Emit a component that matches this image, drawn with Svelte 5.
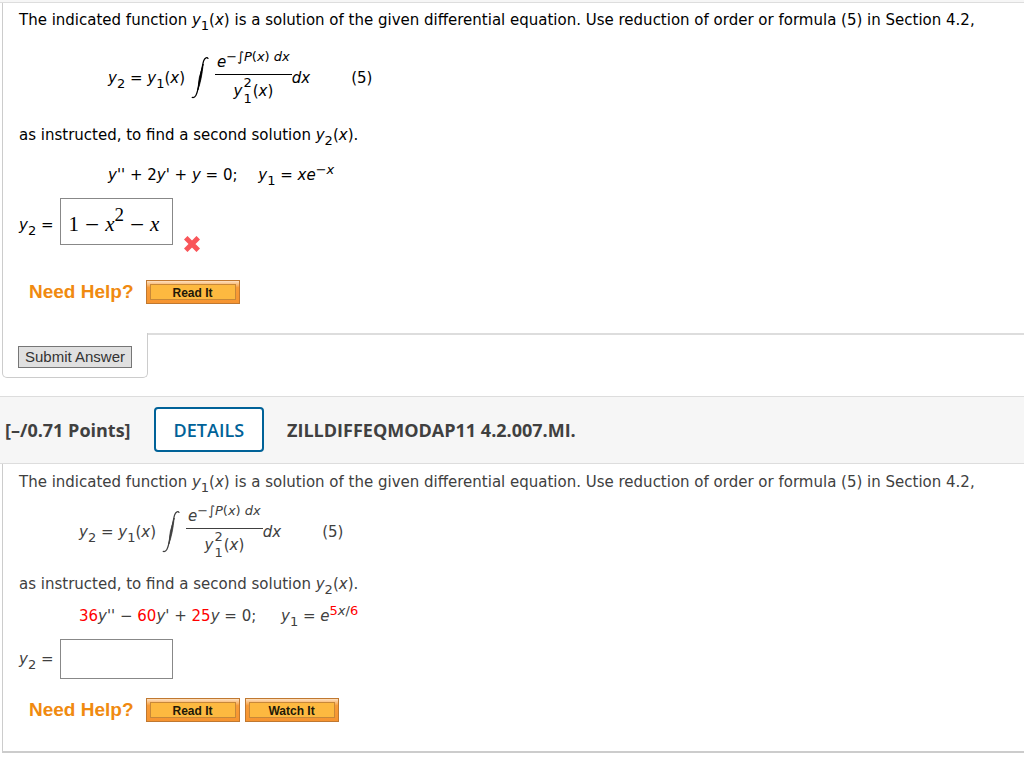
<script lang="ts">
	let answer = $state('');
	let submitted = $state(false);

	const points = '[–/0.71 Points]';
	const source = 'ZILLDIFFEQMODAP11 4.2.007.MI.';
</script>

{#snippet intro()}
	<p class="text">
		The indicated function <i>y</i><sub>1</sub>(<i>x</i>) is a solution of the given differential equation. Use
		reduction of order or formula (5) in Section 4.2,
	</p>
{/snippet}

{#snippet instructions()}
	<p class="text">as instructed, to find a second solution <i>y</i><sub>2</sub>(<i>x</i>).</p>
{/snippet}

{#snippet formula()}
	<div class="formula">
		<span class="lhs"><i>y</i><sub>2</sub> = <i>y</i><sub>1</sub>(<i>x</i>)</span>
		<svg class="integral" viewBox="0 0 18 44" width="18" height="44" aria-label="integral">
			<path
				d="M17 2.4C16.4 1.2 13.8 1.2 12.6 5C11.2 9.5 9.2 23 7.2 32C5.8 38.5 4.4 42.3 1.2 41.4"
				fill="none"
				stroke="currentColor"
				stroke-width="1.2"
				stroke-linecap="round"
			/>
			<path d="M12.2 8Q10.6 24 6.8 34Q7.2 22 12.2 8Z" fill="currentColor" stroke="currentColor" stroke-width="0.8" />
		</svg>
		<span class="fraction">
			<span class="numerator"><i>e</i><sup>−∫<i>P</i>(<i>x</i>) <i>dx</i></sup></span>
			<span class="denominator">
				<i>y</i><span class="stack"><span>2</span><span>1</span></span>(<i>x</i>)
			</span>
		</span>
		<i>dx</i>
		<span class="number">(5)</span>
	</div>
{/snippet}

{#snippet helpButton(label: string)}
	<button class="help-button" type="button"><span>{label}</span></button>
{/snippet}

<main>
	<section class="question first">
		<div class="body">
			{@render intro()}
			{@render formula()}
			{@render instructions()}
			<p class="equation">
				<i>y''</i> + 2<i>y'</i> + <i>y</i> = 0; <span class="initial"><i>y</i><sub>1</sub> = <i>xe</i><sup>−<i>x</i></sup></span>
			</p>
			<div class="answer">
				<span class="label" id="first-label"><i>y</i><sub>2</sub> =</span>
				<div class="math-box" role="textbox" tabindex="0" contenteditable="true" aria-labelledby="first-label">1<span class="op">−</span><i>x</i><sup>2</sup><span class="op">−</span><i>x</i></div>
				<svg class="wrong" viewBox="0 0 16 16" width="16" height="16" aria-label="Incorrect">
					<path d="M3.5 3.5L12.5 12.5M12.5 3.5L3.5 12.5" stroke="#f9565a" stroke-width="5" stroke-linecap="square" />
				</svg>
			</div>
			<div class="help">
				<strong>Need Help?</strong>
				{@render helpButton('Read It')}
			</div>
		</div>
		<div class="submit-row">
			<div class="submit-tab">
				<button class="submit" type="button" onclick={() => (submitted = true)} disabled={submitted}>Submit Answer</button>
			</div>
			<div class="rule"></div>
		</div>
	</section>

	<header>
		<strong>{points}</strong>
		<button class="details" type="button">DETAILS</button>
		<strong>{source}</strong>
	</header>

	<section class="question second">
		<div class="body">
			{@render intro()}
			{@render formula()}
			{@render instructions()}
			<p class="equation">
				<b>36</b><i>y''</i> − <b>60</b><i>y'</i> + <b>25</b><i>y</i> = 0; <span class="initial"><i>y</i><sub>1</sub> = <i>e</i><sup><b>5</b><i>x</i>/<b>6</b></sup></span>
			</p>
			<div class="answer">
				<label class="label" for="second-answer"><i>y</i><sub>2</sub> =</label>
				<input id="second-answer" type="text" bind:value={answer} />
			</div>
			<div class="help">
				<strong>Need Help?</strong>
				{@render helpButton('Read It')}
				{@render helpButton('Watch It')}
			</div>
		</div>
	</section>
</main>

<style>
	:global(body) {
		margin: 0;
		background: white;
	}

	main {
		border-top: 2px solid #f6f6f6;
		font-family: 'DejaVu Sans', Verdana, sans-serif;
		font-size: 15px;
		line-height: 24px;
		overflow-x: hidden;
	}

	.first {
		border-top: 1px solid #ddd;
		color: black;
	}

	.second {
		color: #404040;
	}

	.body {
		margin-left: 2px;
		border-left: 1px solid #ccc;
		padding-left: 16px;
	}

	.first .body {
		padding-top: 5px;
		padding-bottom: 29px;
	}

	.second .body {
		border-bottom: 2px solid #ccc;
		padding-top: 6px;
		padding-bottom: 29px;
	}

	p {
		margin: 0;
	}

	.text {
		white-space: nowrap;
	}

	sub,
	sup {
		font-size: 13px;
		line-height: 0;
	}

	sub {
		vertical-align: -5px;
	}

	sup {
		vertical-align: 6px;
	}

	.formula {
		display: flex;
		align-items: center;
		margin: 18px 0 17px 89px;
	}

	.second .formula {
		margin: 10px 0 12px 60px;
	}

	.integral {
		margin: 0 6px;
	}

	.fraction {
		display: flex;
		flex-direction: column;
		text-align: center;
	}

	.numerator {
		height: 24px;
		padding: 0 2px;
		border-bottom: 1px solid currentColor;
	}

	.denominator {
		height: 31px;
		line-height: 31px;
	}

	.stack {
		display: inline-flex;
		flex-direction: column;
		margin: 0 1px;
		font-size: 13px;
		line-height: 16px;
		vertical-align: middle;
	}

	.number {
		margin-left: 41px;
	}

	.equation {
		margin: 16px 0 11px 89px;
	}

	.second .equation {
		margin: 8px 0 11px 60px;
	}

	.initial {
		margin-left: 16px;
	}

	.second .initial {
		margin-left: 20px;
	}

	b {
		color: red;
		font-weight: normal;
	}

	.answer {
		display: flex;
		align-items: center;
		gap: 6px;
	}

	.first .answer {
		height: 54px;
	}

	.math-box {
		box-sizing: border-box;
		align-self: flex-start;
		min-width: 113px;
		height: 47px;
		padding: 4px 8px;
		border: 1px solid #888;
		font-family: 'Liberation Serif', 'Times New Roman', serif;
		font-size: 21px;
		line-height: 43px;
	}

	.math-box sup {
		font-size: 19px;
		vertical-align: 10px;
	}

	.op {
		padding: 0 6px;
		font-size: 25px;
		line-height: 0;
		vertical-align: -2px;
	}

	.wrong {
		align-self: flex-end;
		margin-left: 5px;
	}

	input {
		box-sizing: border-box;
		width: 113px;
		height: 40px;
		padding: 4px 8px;
		border: 1px solid #888;
		font-family: 'Liberation Serif', 'Times New Roman', serif;
		font-size: 21px;
	}

	.help {
		display: flex;
		align-items: center;
		gap: 5px;
		margin: 28px 0 0 10px;
	}

	.second .help {
		margin-top: 19px;
	}

	.help strong {
		margin-right: 7px;
		color: #f08a10;
		font-family: 'Liberation Sans', Arial, sans-serif;
		font-size: 19px;
	}

	.help-button {
		width: 94px;
		height: 24px;
		padding: 3px;
		border: 1px solid #c07830;
		background: linear-gradient(#fde0c0, #f89c38 30%, #f69430);
		color: #201808;
		font-family: 'Liberation Sans', Arial, sans-serif;
		font-size: 12px;
		font-weight: bold;
		cursor: pointer;
	}

	.help-button span {
		display: block;
		height: 14px;
		border: 1px solid #c88838;
		background: #fdb940;
		line-height: 16px;
	}

	.submit-row {
		display: flex;
		margin-left: 2px;
	}

	.submit-tab {
		padding: 13px 15px 9px;
		border: 1px solid #ccc;
		border-top: none;
		border-radius: 0 0 5px 5px;
	}

	.submit {
		display: block;
		height: 22px;
		padding: 0 6px;
		border: 1px solid #767676;
		background: #e0e0e0;
		color: #333;
		font-family: 'Liberation Sans', Arial, sans-serif;
		font-size: 15px;
		line-height: 20px;
	}

	.rule {
		flex: 1;
		border-top: 2px solid #ddd;
	}

	header {
		display: flex;
		align-items: center;
		gap: 23px;
		margin-top: 18px;
		padding: 10px 5px 11px;
		border-top: 1px solid #ddd;
		border-bottom: 1px solid #ddd;
		background: #f6f6f6;
		color: #404040;
		font-family: 'Open Sans', 'Noto Sans', sans-serif;
		font-size: 18px;
	}

	.details {
		height: 45px;
		padding: 0 18px;
		border: 2px solid #006298;
		border-radius: 4px;
		background: white;
		color: #006298;
		font: inherit;
		font-weight: 600;
		cursor: pointer;
	}
</style>
